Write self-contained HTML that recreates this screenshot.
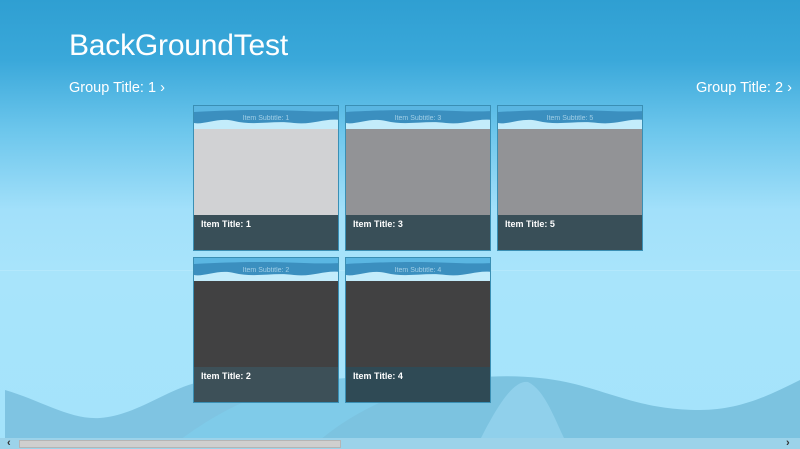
<!DOCTYPE html>
<html><head><style>
*{margin:0;padding:0;box-sizing:border-box}
body{width:800px;height:449px;overflow:hidden;position:relative;font-family:"Liberation Sans",sans-serif;
background:linear-gradient(180deg,#2f9fd2 0px,#3aa8da 60px,#6cc6ec 130px,#a2e0fa 210px,#a8e4fb 270px,#a4e3fb 449px);}
h1{position:absolute;left:69px;top:29px;font-weight:normal;font-size:30px;color:#fff;letter-spacing:-0.2px}
.g{position:absolute;top:80px;font-size:14.5px;color:#fff}
.t{position:absolute;width:146px;height:146px;border:1px solid #3a8fb4;overflow:hidden}
.hd{position:absolute;left:0;top:0;width:100%;height:23px;background:#c3ecfb}
.im{position:absolute;left:0;top:23px;width:100%;height:87px}
.ti{position:absolute;left:0;bottom:0;width:100%;height:35px;background:#394f58;color:#fff;font-size:9px;font-weight:bold;padding:4px 7px}
.st{position:absolute;left:0;width:100%;top:9px;text-align:center;font-size:7px;color:#e0f6ff;opacity:.6}
</style></head><body>
<svg style="position:absolute;left:0;top:270px" width="800" height="170">
<path d="M0 0H800" stroke="#c0ecfc" stroke-width="1"/>
<path d="M5 120 C40 130 70 150 100 148 C140 145 170 115 210 110 C240 108 260 140 280 170 L5 170Z" fill="#7fc4e2"/>
<path d="M180 170 C260 110 330 105 400 108 C460 112 500 120 520 130 L540 170Z" fill="#7fcbe9"/>
<path d="M320 170 C380 120 460 100 540 108 C600 114 630 140 700 140 C740 140 770 125 800 110 L800 170Z" fill="#7cc3e0"/>
<path d="M480 170 C500 130 515 110 528 112 C545 120 555 150 565 170Z" fill="#98d6f0" opacity=".7"/>
</svg>
<h1>BackGroundTest</h1>
<div class="g" style="left:69px">Group Title: 1 ›</div>
<div class="g" style="left:696px">Group Title: 2 ›</div>

<div class="t" style="left:193px;top:105px"><div class="hd"></div><svg style="position:absolute;left:0;top:0" width="146" height="23"><path d="M0 0H146V14C130 12 120 19 100 17C80 14 60 20 40 15C25 11 10 19 0 17Z" fill="#3b8fbf"/><path d="M0 0H146V5C110 7 90 1 0 6Z" fill="#5ab6e2"/></svg><div class="st">Item Subtitle: 1</div><div class="im" style="background:#d1d2d4"></div><div class="ti">Item Title: 1</div></div>
<div class="t" style="left:345px;top:105px"><div class="hd"></div><svg style="position:absolute;left:0;top:0" width="146" height="23"><path d="M0 0H146V14C130 12 120 19 100 17C80 14 60 20 40 15C25 11 10 19 0 17Z" fill="#3b8fbf"/><path d="M0 0H146V5C110 7 90 1 0 6Z" fill="#5ab6e2"/></svg><div class="st">Item Subtitle: 3</div><div class="im" style="background:#929396"></div><div class="ti">Item Title: 3</div></div>
<div class="t" style="left:497px;top:105px"><div class="hd"></div><svg style="position:absolute;left:0;top:0" width="146" height="23"><path d="M0 0H146V14C130 12 120 19 100 17C80 14 60 20 40 15C25 11 10 19 0 17Z" fill="#3b8fbf"/><path d="M0 0H146V5C110 7 90 1 0 6Z" fill="#5ab6e2"/></svg><div class="st">Item Subtitle: 5</div><div class="im" style="background:#929396"></div><div class="ti">Item Title: 5</div></div>
<div class="t" style="left:193px;top:257px"><div class="hd"></div><svg style="position:absolute;left:0;top:0" width="146" height="23"><path d="M0 0H146V14C130 12 120 19 100 17C80 14 60 20 40 15C25 11 10 19 0 17Z" fill="#3b8fbf"/><path d="M0 0H146V5C110 7 90 1 0 6Z" fill="#5ab6e2"/></svg><div class="st">Item Subtitle: 2</div><div class="im" style="background:#414142"></div><div class="ti" style="background:#3d5058">Item Title: 2</div></div>
<div class="t" style="left:345px;top:257px"><div class="hd"></div><svg style="position:absolute;left:0;top:0" width="146" height="23"><path d="M0 0H146V14C130 12 120 19 100 17C80 14 60 20 40 15C25 11 10 19 0 17Z" fill="#3b8fbf"/><path d="M0 0H146V5C110 7 90 1 0 6Z" fill="#5ab6e2"/></svg><div class="st">Item Subtitle: 4</div><div class="im" style="background:#414142"></div><div class="ti" style="background:#2f4a55">Item Title: 4</div></div>

<div style="position:absolute;left:0;top:438px;width:800px;height:11px;background:#9cd3ea"></div>
<div style="position:absolute;left:19px;top:440px;width:322px;height:8px;background:#cfcfcf;border:1px solid #b5b5b5"></div>
<div style="position:absolute;left:7px;top:437px;font-size:11px;font-weight:bold;color:#333">‹</div>
<div style="position:absolute;left:786px;top:437px;font-size:11px;font-weight:bold;color:#333">›</div>
</body></html>
